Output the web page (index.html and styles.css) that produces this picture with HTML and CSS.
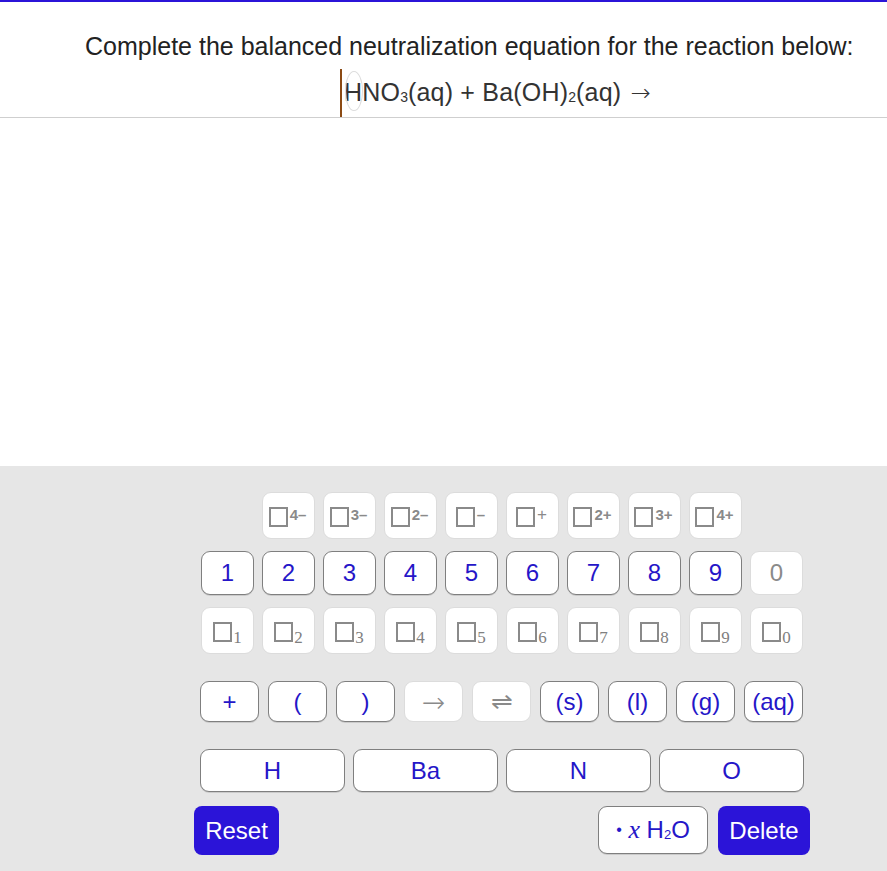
FILE: index.html
```html
<!DOCTYPE html>
<html>
<head>
<meta charset="utf-8">
<link rel="stylesheet" href="styles.css">
</head>
<body>
<div class="page">
  <div class="topbar"></div>
  <div class="question">Complete the balanced neutralization equation for the reaction below:</div>
  <div class="answer-line">
    <div class="eq"><span class="cursor"></span><span class="formula"><span class="first">H<span class="ph"></span></span>NO<span class="sub">3</span>(aq) + Ba(OH)<span class="sub">2</span>(aq) <span class="arrow">→</span></span></div>
  </div>
  <div class="blank"></div>
  <div class="pad">
    <div class="grid10">
      <div class="key dis charge c2"><span class="box"></span><span class="sup">4–</span></div>
      <div class="key dis charge"><span class="box"></span><span class="sup">3–</span></div>
      <div class="key dis charge"><span class="box"></span><span class="sup">2–</span></div>
      <div class="key dis charge"><span class="box"></span><span class="sup">–</span></div>
      <div class="key dis charge"><span class="box"></span><span class="sup thin">+</span></div>
      <div class="key dis charge"><span class="box"></span><span class="sup">2+</span></div>
      <div class="key dis charge"><span class="box"></span><span class="sup">3+</span></div>
      <div class="key dis charge"><span class="box"></span><span class="sup">4+</span></div>
    </div>
    <div class="grid10 nums">
      <div class="key">1</div>
      <div class="key">2</div>
      <div class="key">3</div>
      <div class="key">4</div>
      <div class="key">5</div>
      <div class="key">6</div>
      <div class="key">7</div>
      <div class="key">8</div>
      <div class="key">9</div>
      <div class="key dis">0</div>
    </div>
    <div class="grid10 subs">
      <div class="key dis charge"><span class="box"></span><span class="sb">1</span></div>
      <div class="key dis charge"><span class="box"></span><span class="sb">2</span></div>
      <div class="key dis charge"><span class="box"></span><span class="sb">3</span></div>
      <div class="key dis charge"><span class="box"></span><span class="sb">4</span></div>
      <div class="key dis charge"><span class="box"></span><span class="sb">5</span></div>
      <div class="key dis charge"><span class="box"></span><span class="sb">6</span></div>
      <div class="key dis charge"><span class="box"></span><span class="sb">7</span></div>
      <div class="key dis charge"><span class="box"></span><span class="sb">8</span></div>
      <div class="key dis charge"><span class="box"></span><span class="sb">9</span></div>
      <div class="key dis charge"><span class="box"></span><span class="sb">0</span></div>
    </div>
    <div class="grid9">
      <div class="key">+</div>
      <div class="key">(</div>
      <div class="key">)</div>
      <div class="key dis sym">→</div>
      <div class="key dis sym2">⇌</div>
      <div class="key">(s)</div>
      <div class="key">(l)</div>
      <div class="key">(g)</div>
      <div class="key">(aq)</div>
    </div>
    <div class="grid4">
      <div class="key">H</div>
      <div class="key">Ba</div>
      <div class="key">N</div>
      <div class="key">O</div>
    </div>
    <div class="actions">
      <div class="btn primary">Reset</div>
      <div class="spacer"></div>
      <div class="key water"><span class="wtext"><span class="bul">•</span> <span class="x">x</span> H<span class="wsub">2</span>O</span></div>
      <div class="btn primary">Delete</div>
    </div>
  </div>
</div>
</body>
</html>
```

FILE: styles.css
```css
html, body {
  margin: 0;
  padding: 0;
  background: #ffffff;
}
body {
  font-family: "Liberation Sans", Arial, sans-serif;
  color: #222222;
}
.page {
  height: 871px;
  display: flex;
  flex-direction: column;
  overflow: hidden;
}
.topbar {
  height: 2px;
  background: #2b14d8;
}
.question {
  font-size: 25px;
  line-height: 30px;
  padding: 29px 0 0 85px;
  color: #222222;
}
.answer-line {
  border-bottom: 1px solid #cfcfcf;
  padding-left: 340px;
  margin-top: 6px;
}
.eq {
  display: flex;
  align-items: center;
  height: 50px;
  font-size: 25px;
  color: #333333;
}
.formula {
  white-space: pre;
  letter-spacing: 0.2px;
}
.cursor {
  align-self: stretch;
  width: 2px;
  background: #8b4a14;
  margin-right: 2px;
  margin-top: 2px;
}
.first {
  position: relative;
}
.ph {
  position: absolute;
  left: 1px;
  top: -7px;
  width: 16px;
  height: 38px;
  border: 1px solid #dddddd;
  border-radius: 50%;
}
.sub {
  font-size: 14px;
  position: relative;
  top: 1px;
  letter-spacing: 0;
}
.arrow {
  font-family: "DejaVu Sans", sans-serif;
  font-weight: 200;
  font-size: 24px;
  margin-left: 2px;
}
.blank {
  flex: 1;
}
.pad {
  height: 405px;
  background: #e6e6e6;
  box-sizing: border-box;
  padding: 26px 0 0 200px;
  display: flex;
  flex-direction: column;
}
.key {
  box-sizing: border-box;
  background: #ffffff;
  border: 1px solid #7f7f7f;
  border-radius: 9px;
  box-shadow: 0 1px 0 rgba(0,0,0,0.12);
  color: #2516c8;
  font-size: 24px;
  display: flex;
  align-items: center;
  justify-content: center;
}
.key.dis {
  border-color: #dcdcdc;
  box-shadow: none;
  color: #8a8a8a;
}
.key.sym {
  font-family: "DejaVu Sans", sans-serif;
  font-weight: 200;
  font-size: 28px;
  padding-top: 2px;
}
.key.sym2 {
  font-family: "Liberation Serif", serif;
  font-size: 26px;
}
.grid10 {
  display: grid;
  grid-template-columns: repeat(10, 53px);
  column-gap: 8px;
  margin-left: 1px;
}
.grid10 .key {
  height: 47px;
}
.grid10 .c2 {
  grid-column-start: 2;
}
.nums {
  margin-top: 12px;
}
.nums .key {
  height: 44px;
}
.subs {
  margin-top: 12px;
}
.box {
  display: inline-block;
  box-sizing: border-box;
  width: 19px;
  height: 20px;
  border: 2px solid #8a8a8a;
}
.charge {
  align-items: flex-start;
  padding-top: 14px;
  padding-right: 2px;
}
.sup {
  font-size: 15px;
  font-weight: bold;
  color: #8a8a8a;
  line-height: 15px;
  margin-left: 2px;
  margin-top: 0px;
}
.sup.thin {
  font-weight: normal;
  font-size: 17px;
}
.subs .charge {
  padding-top: 14px;
  padding-right: 0px;
}
.sb {
  font-family: "Liberation Serif", "Times New Roman", serif;
  font-size: 17px;
  color: #808080;
  line-height: 17px;
  margin-top: 7px;
  margin-left: 1px;
}
.grid9 {
  display: grid;
  grid-template-columns: repeat(9, 59px);
  column-gap: 9px;
  margin-top: 27px;
}
.grid9 .key {
  height: 41px;
}
.grid4 {
  display: grid;
  grid-template-columns: repeat(4, 145px);
  column-gap: 8px;
  margin-top: 27px;
}
.grid4 .key {
  height: 43px;
}
.actions {
  display: flex;
  align-items: flex-start;
  margin-top: 14px;
  margin-left: -6px;
  width: 616px;
}
.spacer {
  flex: 1;
}
.btn {
  box-sizing: border-box;
  height: 49px;
  border-radius: 8px;
  font-size: 24px;
  display: flex;
  align-items: center;
  justify-content: center;
}
.primary {
  background: #2b14d8;
  color: #ffffff;
}
.actions .btn:first-child {
  width: 85px;
}
.actions .btn:last-child {
  width: 92px;
  margin-left: 10px;
}
.water {
  width: 110px;
  height: 48px;
}
.wtext {
  white-space: pre;
}
.bul {
  font-size: 16px;
  position: relative;
  top: -3px;
}
.x {
  font-family: "Liberation Serif", "Times New Roman", serif;
  font-style: italic;
  font-size: 26px;
}
.wsub {
  font-size: 13px;
  position: relative;
  top: 1px;
}
```
